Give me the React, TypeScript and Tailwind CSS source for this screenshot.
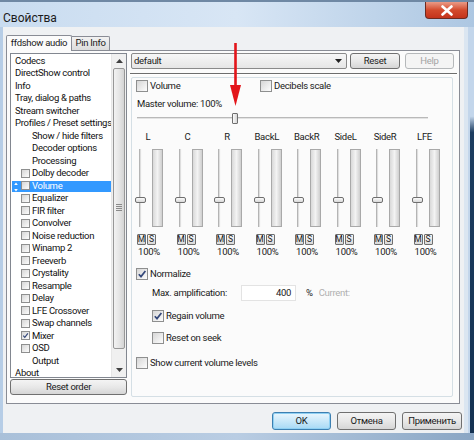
import React from "react";

function Check({ checked = false, size = 12 }: { checked?: boolean; size?: number }) {
  const cls =
    size === 12
      ? "w-[12px] h-[12px]"
      : "w-[9px] h-[9px]";
  return (
    <span
      className={`${cls} shrink-0 inline-flex items-center justify-center border border-[#8e8f8f] bg-linear-to-br from-[#d6d6d6] to-[#fdfdfd]`}
    >
      {checked && (
        <svg width={size - 2} height={size - 2} viewBox="0 0 10 10">
          <path d="M1.8 5.2 L4 7.6 L8.4 2" fill="none" stroke="#34487a" strokeWidth="1.7" />
        </svg>
      )}
    </span>
  );
}

function WinButton({
  children,
  className = "",
  disabled = false,
  focused = false,
}: {
  children: React.ReactNode;
  className?: string;
  disabled?: boolean;
  focused?: boolean;
}) {
  let skin = "border-[#707070] bg-linear-to-b from-[#f4f4f4] via-[#e8e8e8] to-[#d6d6d6] text-[#1a1a1a]";
  if (disabled) skin = "border-[#b5b8ba] bg-[#f4f4f4] text-[#a3a3a3]";
  if (focused) skin = "border-[#3c7fb1] bg-linear-to-b from-[#eaf6fd] via-[#c9e8f9] to-[#a7d9f5] text-[#1a1a1a] shadow-[inset_0_0_0_1px_#8fd0f3]";
  return (
    <div className={`flex items-center justify-center border rounded-[3px] ${skin} ${className}`}>
      {children}
    </div>
  );
}

type Item = { t: string; lvl?: number; cb?: boolean; checked?: boolean; sel?: boolean };

const items: Item[] = [
  { t: "Codecs" },
  { t: "DirectShow control" },
  { t: "Info" },
  { t: "Tray, dialog & paths" },
  { t: "Stream switcher" },
  { t: "Profiles / Preset settings" },
  { t: "Show / hide filters", lvl: 1 },
  { t: "Decoder options", lvl: 1 },
  { t: "Processing", lvl: 1 },
  { t: "Dolby decoder", cb: true },
  { t: "Volume", cb: true, sel: true },
  { t: "Equalizer", cb: true },
  { t: "FIR filter", cb: true },
  { t: "Convolver", cb: true },
  { t: "Noise reduction", cb: true },
  { t: "Winamp 2", cb: true },
  { t: "Freeverb", cb: true },
  { t: "Crystality", cb: true },
  { t: "Resample", cb: true },
  { t: "Delay", cb: true },
  { t: "LFE Crossover", cb: true },
  { t: "Swap channels", cb: true },
  { t: "Mixer", cb: true, checked: true },
  { t: "OSD", cb: true },
  { t: "Output", lvl: 1 },
  { t: "About" },
];

const channels = ["L", "C", "R", "BackL", "BackR", "SideL", "SideR", "LFE"];

function ListRow({ it }: { it: Item }) {
  if (it.cb) {
    return (
      <div className="h-[12.5px] flex items-center relative">
        {it.sel && (
          <div className="absolute left-[1px] right-0 top-[1px] bottom-0 bg-[#3399ff]" />
        )}
        {it.sel && (
          <svg className="absolute left-[3px] top-[2px]" width="4" height="10" viewBox="0 0 4 10">
            <path d="M2 0.5 L3.8 3 L0.2 3 Z" fill="#ffffff" />
            <path d="M2 9.5 L3.8 7 L0.2 7 Z" fill="#ffffff" />
          </svg>
        )}
        <div className="relative flex items-center pl-[10px]">
          <Check size={9} checked={it.checked} />
          <span className={`ml-[2px] whitespace-nowrap ${it.sel ? "text-white" : ""}`}>{it.t}</span>
        </div>
      </div>
    );
  }
  return (
    <div className={`h-[12.5px] flex items-center whitespace-nowrap ${it.lvl === 1 ? "pl-[21px]" : "pl-[4px]"}`}>
      {it.t}
    </div>
  );
}

function ListBox() {
  return (
    <div className="w-[117px] h-[325px] border border-[#828790] bg-white flex overflow-hidden">
      <div className="flex-1 pt-[0.5px] overflow-hidden text-[#111]">
        {items.map((it) => (
          <ListRow key={it.t} it={it} />
        ))}
      </div>
      <div className="w-[15px] flex flex-col bg-[#f0f0f0] border-l border-[#e6e6e6]">
        <div className="h-[13px] flex items-center justify-center">
          <svg width="7" height="4" viewBox="0 0 7 4">
            <path d="M0 4 L3.5 0 L7 4 Z" fill="#404040" />
          </svg>
        </div>
        <div className="mt-[1px] mx-[1px] h-[281px] border border-[#979797] rounded-[2px] bg-linear-to-r from-[#f2f2f2] via-[#e6e6e6] to-[#d4d4d4] flex flex-col items-center">
          <div className="mt-[135px] flex flex-col gap-[1px]">
            <div className="w-[6px] h-[1px] bg-[#8a8a8a]" />
            <div className="w-[6px] h-[1px] bg-[#8a8a8a]" />
            <div className="w-[6px] h-[1px] bg-[#8a8a8a]" />
            <div className="w-[6px] h-[1px] bg-[#8a8a8a]" />
          </div>
        </div>
        <div className="flex-1" />
        <div className="h-[14px] flex items-center justify-center">
          <svg width="7" height="4" viewBox="0 0 7 4">
            <path d="M0 0 L3.5 4 L7 0 Z" fill="#404040" />
          </svg>
        </div>
      </div>
    </div>
  );
}

function Channel({ name }: { name: string }) {
  return (
    <div className="w-[41px] flex flex-col">
      <div className="w-[24px] h-[12px] leading-[12px] text-center">{name}</div>
      <div className="mt-[6px] h-[78px] flex">
        <div className="ml-[-1px] w-[11px] h-[78px] relative flex justify-center">
          <div className="w-[3px] h-full border-l border-[#b4b4b4] border-r border-r-[#f8f8f8] bg-[#dedede]" />
          <div className="absolute left-0 top-[48px] w-[11px] h-[6px] rounded-[2px] border border-[#6f6f6f] bg-linear-to-b from-[#fbfbfb] to-[#d9d9d9]" />
        </div>
        <div className="ml-[6px] w-[11px] h-[78px] border border-[#a9a9a9] bg-linear-to-r from-[#d9d9d9] via-[#f3f3f3] to-[#cfcfcf]" />
      </div>
      <div className="mt-[7px] ml-[1px] flex gap-[1px]">
        <div className="w-[9px] h-[11px] border border-[#6f6f6f] rounded-[1px] bg-linear-to-b from-[#f6f6f6] to-[#d8d8d8] text-[8.5px] leading-[9px] flex items-center justify-center tracking-normal">
          M
        </div>
        <div className="w-[9px] h-[11px] border border-[#6f6f6f] rounded-[1px] bg-linear-to-b from-[#f6f6f6] to-[#d8d8d8] text-[8.5px] leading-[9px] flex items-center justify-center tracking-normal">
          S
        </div>
      </div>
      <div className="mt-[1px] w-[26px] h-[12px] leading-[12px] text-center">100%</div>
    </div>
  );
}

function VolumePage() {
  return (
    <div className="mt-[2px] w-[322px] h-[320px] border border-[#d5dfe5] rounded-[2px] flex flex-col text-[#1a1a1a]">
      <div className="pt-[2px] pl-[4px] flex items-center h-[14px]">
        <div className="w-[124px] flex items-center">
          <Check />
          <span className="ml-[2px]">Volume</span>
        </div>
        <div className="flex items-center">
          <Check />
          <span className="ml-[2px]">Decibels scale</span>
        </div>
      </div>
      <div className="mt-[6px] pl-[5px] h-[12px] leading-[12px]">Master volume: 100%</div>
      <div className="mt-[2px] ml-[5px] w-[291px] h-[13px] relative flex items-center">
        <div className="w-full h-[3px] border-t border-[#b9b9b9] border-b border-b-[#fbfbfb] bg-[#e3e3e3]" />
        <div className="absolute left-[95px] top-[1px] w-[6px] h-[11px] rounded-[1px] border border-[#6f6f6f] bg-linear-to-r from-[#fbfbfb] to-[#d6d6d6]" />
      </div>
      <div className="mt-[6px] pl-[4px] flex">
        {channels.map((c) => (
          <Channel key={c} name={c} />
        ))}
      </div>
      <div className="mt-[9px] pl-[4px] flex items-center">
        <Check checked />
        <span className="ml-[2px]">Normalize</span>
      </div>
      <div className="mt-[4px] pl-[20px] flex items-center h-[16px]">
        <span className="w-[89px]">Max. amplification:</span>
        <div className="w-[55px] h-[16px] bg-white border border-[#e3e3e3] flex items-center justify-end pr-[4px]">400</div>
        <span className="ml-[10px]">%</span>
        <span className="ml-[6px] text-[#b0b0b0]">Current:</span>
      </div>
      <div className="mt-[8px] pl-[20px] flex items-center">
        <Check checked />
        <span className="ml-[2px]">Regain volume</span>
      </div>
      <div className="mt-[7px] pl-[20px] flex items-center">
        <Check />
        <span className="ml-[2px]">Reset on seek</span>
      </div>
      <div className="mt-[11px] pl-[4px] flex items-center">
        <Check />
        <span className="ml-[2px]">Show current volume levels</span>
      </div>
    </div>
  );
}

export default function App() {
  return (
    <div className="w-[474px] h-[440px] overflow-hidden relative flex flex-col bg-[#bcd2ea] font-['Roboto',sans-serif] text-[9.5px] tracking-[-0.3px] text-[#1a1a1a]">
      {/* Title bar */}
      <div className="h-[27px] flex items-start border-t-[2px] border-[#6f88a4] bg-linear-to-r from-[#c9dcf0] via-[#d8e6f5] to-[#adc7e2]">
        <div className="pl-[3px] pt-[7px] text-[12px] tracking-normal text-[#1b1b1b]">Свойства</div>
        <div className="ml-auto mr-[6px] w-[43px] h-[17px] rounded-b-[4px] border border-t-0 border-[#6d2a20] bg-linear-to-b from-[#e99a86] via-[#d34a2c] to-[#c4331b] flex items-center justify-center">
          <svg width="14" height="11" viewBox="0 0 14 11">
            <path d="M2.5 1.5 L11.5 9.5 M11.5 1.5 L2.5 9.5" stroke="#ffffff" strokeWidth="2.6" strokeLinecap="round" />
          </svg>
        </div>
      </div>

      {/* Body */}
      <div className="flex-1 flex">
        <div className="w-[3px] bg-[#b6cde6]" />
        <div className="w-[461px] bg-[#eff1f3] flex flex-col pt-[7px] pl-[3px]">
          {/* Tabs */}
          <div className="h-[16px] flex items-end">
            <div className="w-[66px] h-[16px] bg-[#fbfbfb] border border-b-0 border-[#898c95] rounded-t-[2px] flex items-center justify-center relative top-[1px] z-10">
              ffdshow audio
            </div>
            <div className="w-[38px] h-[14px] bg-linear-to-b from-[#f2f2f2] to-[#dcdcdc] border border-b-0 border-l-0 border-[#898c95] rounded-tr-[2px] flex items-center justify-center">
              Pin Info
            </div>
          </div>
          {/* Tab page */}
          <div className="w-[454px] h-[354px] border border-[#898c95] bg-[#fbfbfb] flex pl-[3px] pt-[2px]">
            <div className="flex flex-col">
              <ListBox />
              <WinButton className="mt-[1px] w-[117px] h-[16px]">Reset order</WinButton>
            </div>
            <div className="ml-[4px] w-[325px] flex flex-col">
              <div className="flex h-[16px]">
                <div className="w-[216px] h-[16px] border border-[#8a8a8a] rounded-[2px] bg-linear-to-b from-[#f7f7f7] to-[#e6e6e6] flex items-center pl-[2px]">
                  <span className="flex-1">default</span>
                  <svg className="mr-[4px]" width="7" height="4" viewBox="0 0 7 4">
                    <path d="M0 0 L3.5 4 L7 0 Z" fill="#222" />
                  </svg>
                </div>
                <WinButton className="ml-[3px] w-[50px] h-[16px]">Reset</WinButton>
                <WinButton className="ml-[5px] w-[49px] h-[16px]" disabled>
                  Help
                </WinButton>
              </div>
              <div className="mt-[4px] w-[327px] -ml-[1px] h-[2px] border-t border-[#6d6d6d] border-b border-b-white" />
              <VolumePage />
            </div>
          </div>
          {/* Bottom buttons */}
          <div className="mt-[8px] flex justify-end pr-[2px] gap-[6px]">
            <WinButton focused className="w-[59px] h-[18px]">OK</WinButton>
            <WinButton className="w-[59px] h-[18px]">Отмена</WinButton>
            <WinButton className="w-[60px] h-[18px]">Применить</WinButton>
          </div>
        </div>
        <div className="flex-1 flex bg-[#c3d6eb]">
          <div className="w-[4px] bg-[#dbe6f1]" />
          <div className="flex-1" />
          <div className="w-[4px] bg-linear-to-b from-[#c3d6eb] from-[22%] via-[#1c3d60] via-[26%] to-[#143252]" />
        </div>
      </div>
      <div className="h-[7px] bg-linear-to-r from-[#a9c0d9] via-[#b9cde3] to-[#8aa6c4]" />

      {/* Red annotation arrow */}
      <svg className="absolute left-[229px] top-[42px]" width="14" height="66" viewBox="0 0 14 66">
        <line x1="6.5" y1="1" x2="6.5" y2="46" stroke="#e3151a" strokeWidth="2.6" />
        <path d="M1 43 L12 43 L6.5 64 Z" fill="#e3151a" />
      </svg>
    </div>
  );
}
